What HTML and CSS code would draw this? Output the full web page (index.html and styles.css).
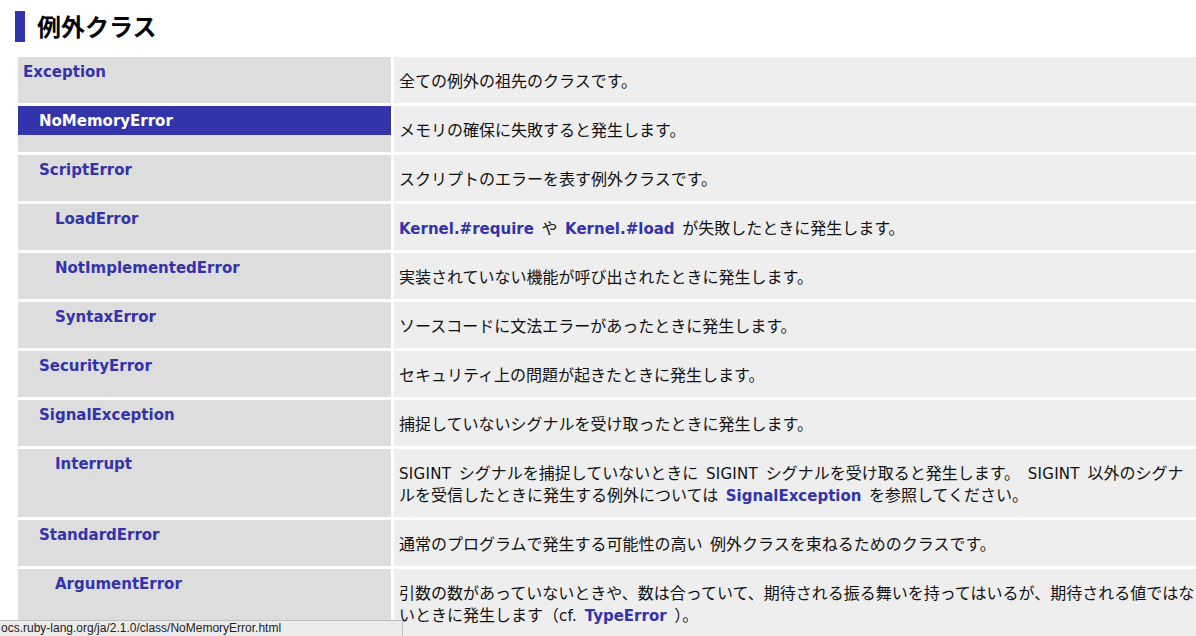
FILE: index.html
```html
<!DOCTYPE html>
<html lang="ja">
<head>
<meta charset="utf-8">
<title>例外クラス</title>
<link rel="stylesheet" href="styles.css">
</head>
<body>
<div class="page">
  <h2 class="title">例外クラス</h2>
  <table class="classes">
    <tr>
      <td class="name"><a class="cls lv0" href="#">Exception</a></td>
      <td class="desc">全ての例外の祖先のクラスです。</td>
    </tr>
    <tr>
      <td class="name"><a class="cls lv1 hover" href="#">NoMemoryError</a></td>
      <td class="desc">メモリの確保に失敗すると発生します。</td>
    </tr>
    <tr>
      <td class="name"><a class="cls lv1" href="#">ScriptError</a></td>
      <td class="desc">スクリプトのエラーを表す例外クラスです。</td>
    </tr>
    <tr>
      <td class="name"><a class="cls lv2" href="#">LoadError</a></td>
      <td class="desc"><a class="en ref" href="#">Kernel.#require</a> や <a class="en ref" href="#">Kernel.#load</a> が失敗したときに発生します。</td>
    </tr>
    <tr>
      <td class="name"><a class="cls lv2" href="#">NotImplementedError</a></td>
      <td class="desc">実装されていない機能が呼び出されたときに発生します。</td>
    </tr>
    <tr>
      <td class="name"><a class="cls lv2" href="#">SyntaxError</a></td>
      <td class="desc">ソースコードに文法エラーがあったときに発生します。</td>
    </tr>
    <tr>
      <td class="name"><a class="cls lv1" href="#">SecurityError</a></td>
      <td class="desc">セキュリティ上の問題が起きたときに発生します。</td>
    </tr>
    <tr>
      <td class="name"><a class="cls lv1" href="#">SignalException</a></td>
      <td class="desc">捕捉していないシグナルを受け取ったときに発生します。</td>
    </tr>
    <tr>
      <td class="name"><a class="cls lv2" href="#">Interrupt</a></td>
      <td class="desc"><span class="en">SIGINT</span> シグナルを捕捉していないときに <span class="en">SIGINT</span> シグナルを受け取ると発生します。 <span class="en">SIGINT</span> 以外のシグナルを受信したときに発生する例外については <a class="en ref" href="#">SignalException</a> を参照してください。</td>
    </tr>
    <tr>
      <td class="name"><a class="cls lv1" href="#">StandardError</a></td>
      <td class="desc">通常のプログラムで発生する可能性の高い 例外クラスを束ねるためのクラスです。</td>
    </tr>
    <tr>
      <td class="name"><a class="cls lv2" href="#">ArgumentError</a></td>
      <td class="desc">引数の数があっていないときや、数は合っていて、期待される振る舞いを持ってはいるが、期待される値ではないときに発生します（<span class="en">cf.</span> <a class="en ref" href="#">TypeError</a> ）。</td>
    </tr>
  </table>
</div>
<div class="status">ocs.ruby-lang.org/ja/2.1.0/class/NoMemoryError.html</div>
</body>
</html>
```
FILE: styles.css
```css
html {
  overflow: hidden;
}
body {
  margin: 0;
  background: #ffffff;
  color: #000000;
  font-family: "DejaVu Sans", "Noto Sans CJK JP", sans-serif;
}
.page {
  padding: 11px 0 0 15px;
}
.title {
  margin: 0;
  height: 31px;
  line-height: 29px;
  border-left: 10px solid #3333aa;
  padding-left: 12px;
  font-family: "Noto Sans CJK JP", sans-serif;
  font-size: 24px;
  font-weight: bold;
  color: #000000;
}
.classes {
  margin-top: 12px;
  width: 1188px;
  table-layout: fixed;
  border-collapse: separate;
  border-spacing: 3px;
}
.classes td {
  box-sizing: border-box;
}
.name {
  width: 373px;
  background: #dddddd;
  vertical-align: top;
  padding: 0;
}
.desc {
  width: 806px;
  background: #eeeeee;
  vertical-align: middle;
  padding: 12px 5px;
  font-family: "Noto Sans CJK JP", sans-serif;
  font-size: 16px;
  line-height: 22px;
  word-spacing: 4px;
  color: #111111;
}
.cls {
  display: block;
  padding: 5px 5px 3px;
  line-height: 21px;
  font-family: "DejaVu Sans", sans-serif;
  font-size: 15px;
  font-weight: bold;
  color: #3333aa;
  text-decoration: none;
}
.lv1 {
  padding-left: 21px;
}
.lv2 {
  padding-left: 37px;
}
.hover {
  background: #3333aa;
  color: #ffffff;
}
.en {
  font-family: "DejaVu Sans", sans-serif;
  font-size: 15px;
  line-height: 1;
  word-spacing: 0;
  letter-spacing: 0.3px;
}
.ref {
  font-weight: bold;
  color: #3333aa;
  text-decoration: none;
  letter-spacing: 0;
}
.status {
  position: fixed;
  left: 0;
  bottom: 0;
  width: 403px;
  height: 16px;
  box-sizing: border-box;
  background: #ececec;
  border-top: 1px solid #bdbdbd;
  border-right: 1px solid #bdbdbd;
  font-family: "Liberation Sans", sans-serif;
  font-size: 12px;
  line-height: 15px;
  color: #222222;
  padding-left: 1px;
  white-space: nowrap;
  overflow: hidden;
}
```
